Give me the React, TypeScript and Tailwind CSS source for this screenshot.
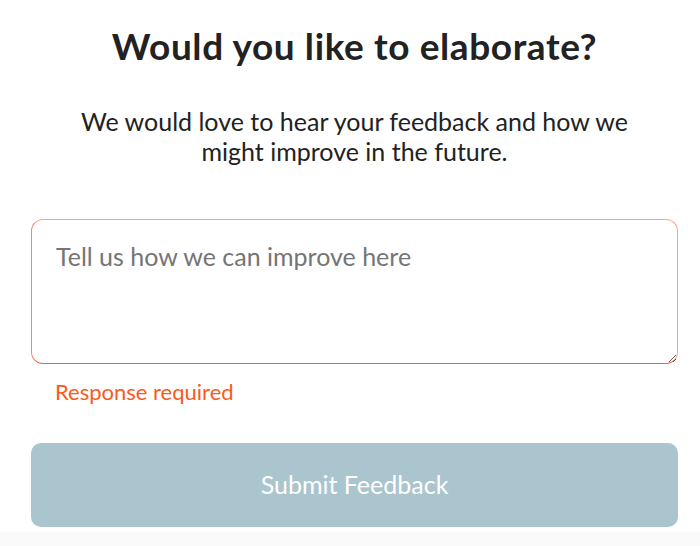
export default function App() {
  return (
    <div className="min-h-[546px] bg-[#fafafa] font-['Lato','Noto_Sans',sans-serif]">
      <div className="bg-white pl-[31px] pr-[22px] pt-[24px] pb-[5px]">
        <h1 className="text-center text-[37px] leading-[44px] font-bold tracking-[0.6px] text-[#222]">
          Would you like to elaborate?
        </h1>
        <p className="mx-auto mt-[38px] max-w-[575px] text-center text-[25px] leading-[30px] text-[#222]">
          We would love to hear your feedback and how we might improve in the future.
        </p>
        <textarea
          className="mt-[53px] block h-[145px] w-full rounded-[12px] border border-[#f7875f] border-t-[#ffa184] border-r-[#ffa184] border-b-[#f0643a] px-[24px] py-[21px] text-[25px] leading-[30px] text-[#222] outline-none placeholder:text-[#757575]"
          placeholder="Tell us how we can improve here"
        />
        <p className="mt-[15px] pl-[24px] text-[22px] leading-[26px] text-[#fb5a1e]">Response required</p>
        <button className="mt-[38px] flex h-[84px] w-full items-center justify-center rounded-[10px] bg-[#abc5ce] text-[25px] text-white">
          Submit Feedback
        </button>
      </div>
    </div>
  );
}
